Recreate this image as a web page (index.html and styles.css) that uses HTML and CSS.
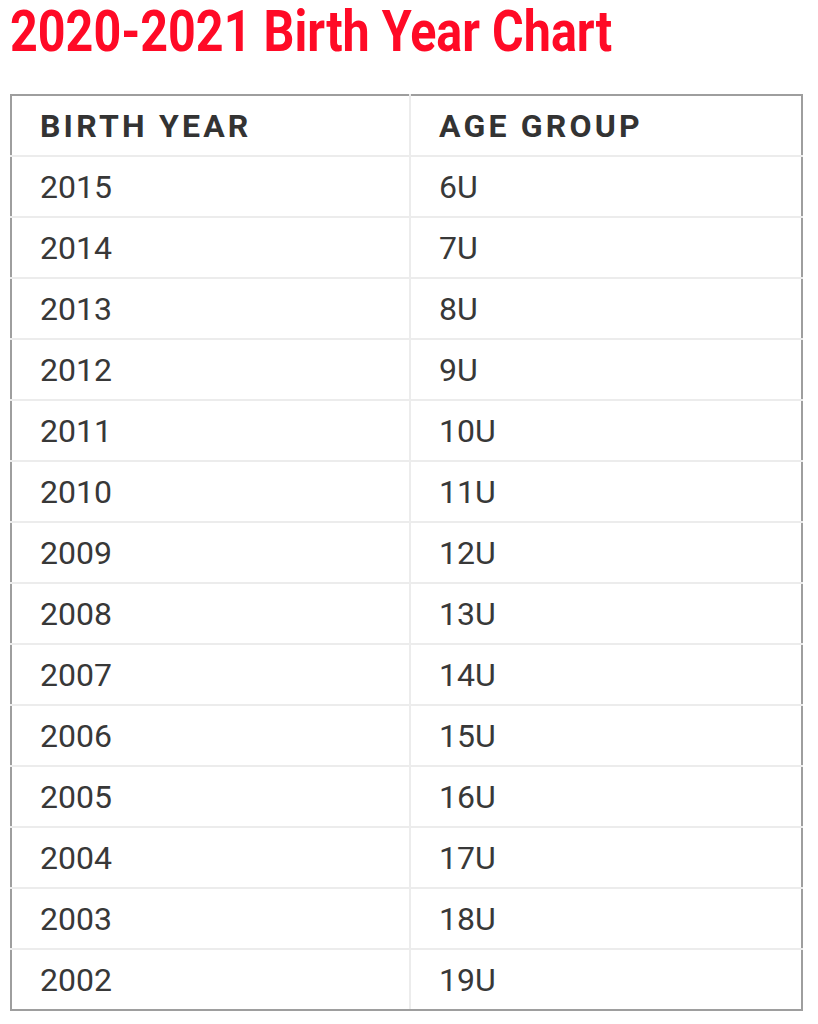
FILE: index.html
```html
<!DOCTYPE html>
<html>
<head>
<meta charset="utf-8">
<link rel="stylesheet" href="styles.css">
</head>
<body>
<h1 class="title"><span>2020-2021 Birth Year Chart</span></h1>
<table class="chart">
<thead>
<tr><th>BIRTH YEAR</th><th>AGE GROUP</th></tr>
</thead>
<tbody>
<tr><td>2015</td><td>6U</td></tr>
<tr><td>2014</td><td>7U</td></tr>
<tr><td>2013</td><td>8U</td></tr>
<tr><td>2012</td><td>9U</td></tr>
<tr><td>2011</td><td>10U</td></tr>
<tr><td>2010</td><td>11U</td></tr>
<tr><td>2009</td><td>12U</td></tr>
<tr><td>2008</td><td>13U</td></tr>
<tr><td>2007</td><td>14U</td></tr>
<tr><td>2006</td><td>15U</td></tr>
<tr><td>2005</td><td>16U</td></tr>
<tr><td>2004</td><td>17U</td></tr>
<tr><td>2003</td><td>18U</td></tr>
<tr><td>2002</td><td>19U</td></tr>
</tbody>
</table>
</body>
</html>
```
FILE: styles.css
```css
html, body {
  margin: 0;
  padding: 0;
  background: #ffffff;
}
body {
  padding: 0 15px 0 10px;
  font-family: Roboto, "Liberation Sans", sans-serif;
  color: #383838;
}
.title {
  margin: 0;
  padding-top: 2px;
  height: 61px;
  line-height: 60px;
  font-size: 57px;
  font-weight: 700;
  color: #ff0a26;
  white-space: nowrap;
}
.title span {
  display: inline-block;
  transform: scaleX(0.85);
  transform-origin: left center;
}
.chart {
  margin-top: 31px;
  width: 793px;
  border-collapse: collapse;
  border: 2px solid #9e9e9e;
  table-layout: fixed;
}
.chart th,
.chart td {
  height: 59px;
  padding: 0 0 0 28px;
  text-align: left;
  vertical-align: middle;
  border-bottom: 2px solid #ececec;
  border-right: 2px solid #ececec;
  white-space: nowrap;
}
.chart th:first-child,
.chart td:first-child {
  width: 369px;
}
.chart th {
  font-size: 32px;
  font-weight: 700;
  letter-spacing: 3.2px;
  color: #333333;
  border-top: 2px solid #9e9e9e;
}
.chart td {
  font-size: 32px;
  font-weight: 400;
}
.chart tr > :last-child {
  border-right: 2px solid #9e9e9e;
}
.chart tbody tr:last-child td {
  border-bottom: 2px solid #9e9e9e;
}
```
